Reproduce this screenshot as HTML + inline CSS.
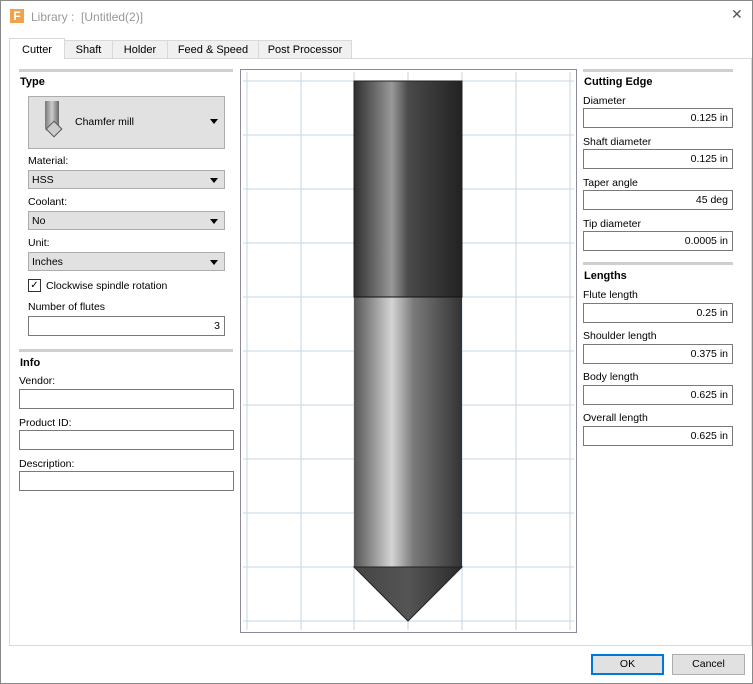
<!DOCTYPE html><html><head><style>
body{margin:0;width:753px;height:684px;background:#f0f0f0;font-family:"Liberation Sans",sans-serif;font-size:10.5px;color:#000;position:relative;overflow:hidden}
.a{position:absolute}
.f{position:absolute;background:#fff;border:1px solid #7a7a7a;box-sizing:border-box;height:20px;text-align:right;padding-right:4px;line-height:19px}
.c{position:absolute;background:#e1e1e1;border:1px solid #adadad;box-sizing:border-box;height:19px;line-height:18px;padding-left:3px}
.c:after{content:"";position:absolute;right:6px;top:7px;border:4px solid transparent;border-top:5px solid #000;border-bottom:0}
.sep{position:absolute;height:3px;background:#cfcfcf}
b{font-weight:bold;font-size:11px}
.tab{position:absolute;top:40px;height:18px;border:1px solid #d9d9d9;border-bottom:none;background:#f0f0f0;text-align:center;line-height:18px;font-size:11px;box-sizing:border-box}
</style></head><body>
<div class="a" style="left:0;top:0;width:753px;height:684px;background:#fff;border:1px solid #888;box-sizing:border-box"></div>
<div class="a" style="left:10px;top:9px;width:14px;height:14px;background:#f2a24a;color:#fff;font-weight:bold;font-size:12px;line-height:14px;text-align:center">F</div>
<div class="a" style="left:31px;top:10px;color:#999;font-size:12px">Library :&nbsp; [Untitled(2)]</div>
<div class="a" style="left:731px;top:6px;font-size:14px;color:#555">✕</div>
<div class="a" style="left:9px;top:58px;width:743px;height:588px;background:#fff;border:1px solid #d9d9d9;box-sizing:border-box"></div>
<div class="tab" style="left:9px;top:38px;width:56px;height:21px;background:#fff;line-height:22px">Cutter</div>
<div class="tab" style="left:64px;width:49px">Shaft</div>
<div class="tab" style="left:112px;width:56px">Holder</div>
<div class="tab" style="left:167px;width:92px">Feed &amp; Speed</div>
<div class="tab" style="left:258px;width:94px">Post Processor</div>

<div class="sep" style="left:19px;top:69px;width:214px"></div>
<div class="a" style="left:20px;top:76px"><b>Type</b></div>
<div class="a" style="left:28px;top:96px;width:197px;height:53px;background:#e1e1e1;border:1px solid #adadad;box-sizing:border-box">
<div class="a" style="left:16px;top:4px;width:14px;height:30px;background:linear-gradient(90deg,#777,#ccc,#666);border-radius:0 0 3px 3px"></div>
<div class="a" style="left:19px;top:26px;width:10px;height:10px;background:#ccc;border:1px solid #555;transform:rotate(45deg)"></div>
<div class="a" style="left:46px;top:19px">Chamfer mill</div>
<div class="a" style="right:6px;top:22px;border:4px solid transparent;border-top:5px solid #000;border-bottom:0"></div></div>
<div class="a" style="left:28px;top:155px">Material:</div><div class="c" style="left:28px;top:170px;width:197px">HSS</div>
<div class="a" style="left:28px;top:196px">Coolant:</div><div class="c" style="left:28px;top:211px;width:197px">No</div>
<div class="a" style="left:28px;top:237px">Unit:</div><div class="c" style="left:28px;top:252px;width:197px">Inches</div>
<div class="a" style="left:28px;top:279px;width:11px;height:11px;border:1px solid #333;background:#fff;font-size:10px;line-height:11px;text-align:center">✓</div>
<div class="a" style="left:46px;top:280px">Clockwise spindle rotation</div>
<div class="a" style="left:28px;top:301px">Number of flutes</div><div class="f" style="left:28px;top:316px;width:197px">3</div>
<div class="sep" style="left:19px;top:349px;width:214px"></div>
<div class="a" style="left:20px;top:357px"><b>Info</b></div>
<div class="a" style="left:19px;top:375px">Vendor:</div><div class="f" style="left:19px;top:389px;width:215px"></div>
<div class="a" style="left:19px;top:417px">Product ID:</div><div class="f" style="left:19px;top:430px;width:215px"></div>
<div class="a" style="left:19px;top:458px">Description:</div><div class="f" style="left:19px;top:471px;width:215px"></div>

<svg class="a" style="left:240px;top:69px" width="338" height="565">
<rect x="0.5" y="0.5" width="336" height="563" fill="#fff" stroke="#8a8a9a"/>
<g stroke="#c5d5e6">
<line x1="7" y1="3" x2="7" y2="561"/><line x1="61" y1="3" x2="61" y2="561"/><line x1="114" y1="3" x2="114" y2="561"/><line x1="168" y1="3" x2="168" y2="561"/><line x1="222" y1="3" x2="222" y2="561"/><line x1="276" y1="3" x2="276" y2="561"/><line x1="330" y1="3" x2="330" y2="561"/>
<line x1="3" y1="12" x2="334" y2="12"/><line x1="3" y1="66" x2="334" y2="66"/><line x1="3" y1="120" x2="334" y2="120"/><line x1="3" y1="174" x2="334" y2="174"/><line x1="3" y1="228" x2="334" y2="228"/><line x1="3" y1="282" x2="334" y2="282"/><line x1="3" y1="336" x2="334" y2="336"/><line x1="3" y1="390" x2="334" y2="390"/><line x1="3" y1="444" x2="334" y2="444"/><line x1="3" y1="498" x2="334" y2="498"/><line x1="3" y1="552" x2="334" y2="552"/>
</g>
<defs>
<linearGradient id="g1"><stop offset="0" stop-color="#2e2e2e"/><stop offset=".35" stop-color="#999"/><stop offset=".5" stop-color="#4a4a4a"/><stop offset="1" stop-color="#222"/></linearGradient>
<linearGradient id="g2"><stop offset="0" stop-color="#555"/><stop offset=".35" stop-color="#d4d4d4"/><stop offset=".55" stop-color="#7a7a7a"/><stop offset="1" stop-color="#333"/></linearGradient>
<linearGradient id="g3"><stop offset="0" stop-color="#444"/><stop offset=".5" stop-color="#555"/><stop offset="1" stop-color="#2a2a2a"/></linearGradient>
</defs>
<rect x="114" y="12" width="108" height="216" fill="url(#g1)" stroke="#222"/>
<rect x="114" y="228" width="108" height="270" fill="url(#g2)"/>
<line x1="114" y1="228" x2="222" y2="228" stroke="#111"/>
<polygon points="114,498 222,498 168,552" fill="url(#g3)" stroke="#222"/>
</svg>

<div class="sep" style="left:583px;top:69px;width:150px"></div>
<div class="a" style="left:584px;top:76px"><b>Cutting Edge</b></div>
<div class="a" style="left:583px;top:95px">Diameter</div><div class="f" style="left:583px;top:108px;width:150px">0.125 in</div>
<div class="a" style="left:583px;top:136px">Shaft diameter</div><div class="f" style="left:583px;top:149px;width:150px">0.125 in</div>
<div class="a" style="left:583px;top:177px">Taper angle</div><div class="f" style="left:583px;top:190px;width:150px">45 deg</div>
<div class="a" style="left:583px;top:218px">Tip diameter</div><div class="f" style="left:583px;top:231px;width:150px">0.0005 in</div>
<div class="sep" style="left:583px;top:262px;width:150px"></div>
<div class="a" style="left:584px;top:270px"><b>Lengths</b></div>
<div class="a" style="left:583px;top:289px">Flute length</div><div class="f" style="left:583px;top:303px;width:150px">0.25 in</div>
<div class="a" style="left:583px;top:330px">Shoulder length</div><div class="f" style="left:583px;top:344px;width:150px">0.375 in</div>
<div class="a" style="left:583px;top:371px">Body length</div><div class="f" style="left:583px;top:385px;width:150px">0.625 in</div>
<div class="a" style="left:583px;top:412px">Overall length</div><div class="f" style="left:583px;top:426px;width:150px">0.625 in</div>

<div class="a" style="left:591px;top:654px;width:73px;height:21px;border:2px solid #0078d7;background:#e1e1e1;box-sizing:border-box;text-align:center;line-height:17px">OK</div>
<div class="a" style="left:672px;top:654px;width:73px;height:21px;border:1px solid #adadad;background:#e1e1e1;box-sizing:border-box;text-align:center;line-height:19px">Cancel</div>
</body></html>
